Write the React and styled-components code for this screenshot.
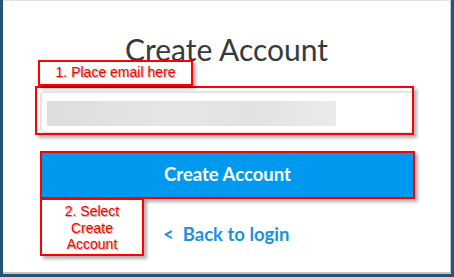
import React from 'react';
import styled, { createGlobalStyle } from 'styled-components';

const GlobalStyle = createGlobalStyle`
  html, body {
    margin: 0;
    padding: 0;
    background: #ffffff;
  }
  * {
    box-sizing: border-box;
  }
`;

const Frame = styled.div`
  width: 454px;
  height: 277px;
  background: #23557a;
  padding: 0 3px 3px 3px;
  overflow: hidden;
`;

const Panel = styled.main`
  height: 100%;
  background: #ffffff;
  border-top: 1px solid #e2e2e2;
  border-right: 1px solid #c9c9c9;
  border-bottom: 2px solid #c4c4c4;
  display: flex;
  flex-direction: column;
  padding-top: 37px;
`;

const Title = styled.h1`
  margin: 0;
  font-family: Lato, 'Open Sans', sans-serif;
  font-weight: 400;
  font-size: 30px;
  line-height: 22px;
  color: #333a40;
  text-align: center;
`;

const Callout = styled.div`
  border: 2px solid #ff0000;
  background: #ffffff;
  box-shadow: 3px 3px 3px rgba(0, 0, 0, 0.3);
  color: #ff0000;
  font-family: 'Liberation Sans', Arial, sans-serif;
  font-size: 14px;
  text-align: center;
  text-shadow: 1px 1px 1px rgba(0, 0, 0, 0.35);
  position: relative;
  z-index: 1;
`;

const EmailCallout = styled(Callout)`
  width: 155px;
  height: 26px;
  margin-left: 35px;
  line-height: 21px;
`;

const StepCallout = styled(Callout)`
  width: 104px;
  height: 58px;
  padding-top: 3px;
  line-height: 16.5px;
`;

const FieldOutline = styled.div`
  width: 379px;
  height: 49px;
  margin-left: 32px;
  border: 2px solid #ff0000;
  box-shadow: 3px 3px 3px rgba(0, 0, 0, 0.3);
  padding: 3px 0 0 3px;
  overflow: hidden;
`;

const Input = styled.div`
  height: 100%;
  width: calc(100% + 8px);
  border: 1px solid #e1e1e1;
  border-radius: 4px;
  box-shadow: inset 1px 1px 2px rgba(0, 0, 0, 0.12);
  padding: 9px 0 0 6px;
`;

const Blurred = styled.div`
  width: 289px;
  height: 25px;
  background: linear-gradient(90deg, #dddddd 0%, #e6e6e6 45%, #e2e2e2 70%, #ebebeb 100%);
  filter: blur(0.6px);
`;

const ButtonOutline = styled.div`
  width: 375px;
  height: 48px;
  margin: 16px 0 0 37px;
  border: 2px solid #ff0000;
  box-shadow: 3px 3px 3px rgba(0, 0, 0, 0.3);
`;

const Button = styled.button`
  width: 100%;
  height: 100%;
  border: none;
  background: #0099f0;
  color: #ffffff;
  font-family: Lato, 'Open Sans', sans-serif;
  font-weight: 700;
  font-size: 18.5px;
  cursor: pointer;
  padding: 0 0 3px 0;
`;

const BottomRow = styled.div`
  display: flex;
  align-items: flex-start;
  gap: 19px;
  margin-left: 37px;
  margin-top: -1px;
`;

const BackLink = styled.a`
  margin-top: 25px;
  font-family: Lato, 'Open Sans', sans-serif;
  font-weight: 700;
  font-size: 18.5px;
  color: #1e8fe6;
  text-decoration: none;
  white-space: pre;
`;

export default function App() {
  return (
    <>
      <GlobalStyle />
      <Frame>
        <Panel>
          <Title>Create Account</Title>
          <EmailCallout>1. Place email here</EmailCallout>
          <FieldOutline>
            <Input>
              <Blurred />
            </Input>
          </FieldOutline>
          <ButtonOutline>
            <Button>Create Account</Button>
          </ButtonOutline>
          <BottomRow>
            <StepCallout>
              2. Select
              <br />
              Create
              <br />
              Account
            </StepCallout>
            <BackLink href="#">{'<  Back to login'}</BackLink>
          </BottomRow>
        </Panel>
      </Frame>
    </>
  );
}
